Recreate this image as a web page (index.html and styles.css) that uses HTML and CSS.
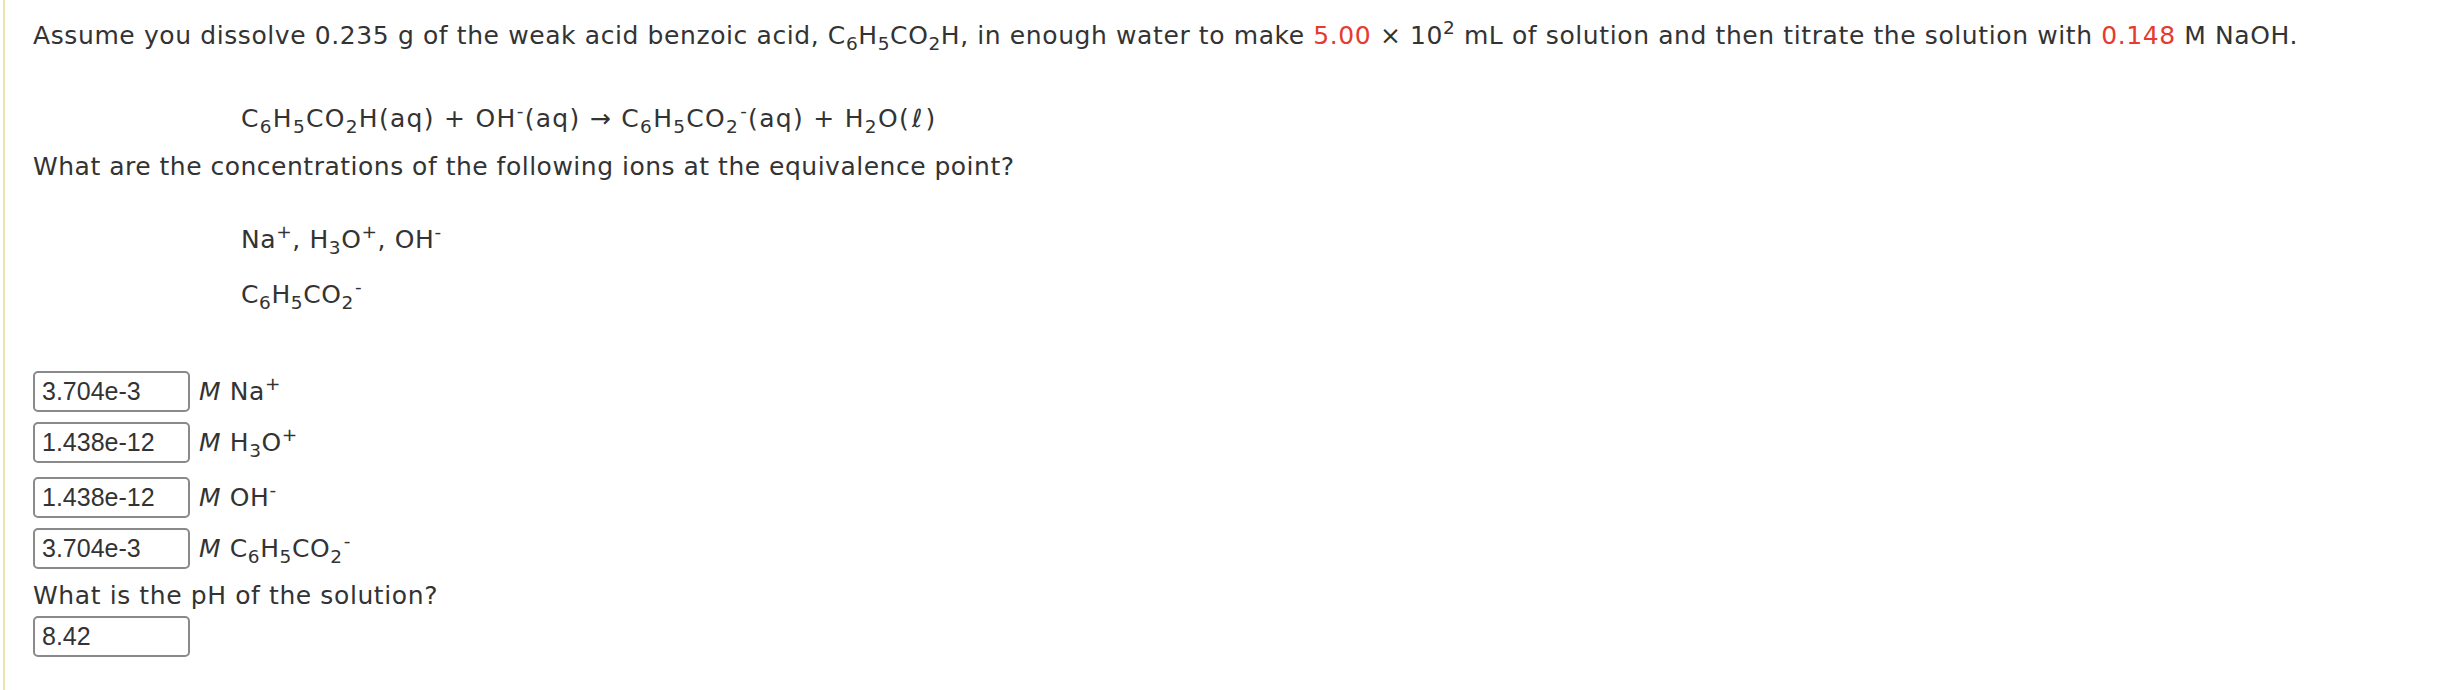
FILE: index.html
```html
<!DOCTYPE html>
<html>
<head>
<meta charset="utf-8">
<link rel="stylesheet" href="styles.css">
</head>
<body>
<div class="page">
  <div class="line l1">Assume you dissolve 0.235 g of the weak acid benzoic acid, C<sub>6</sub>H<sub>5</sub>CO<sub>2</sub>H, in enough water to make <span class="red">5.00</span> × 10<sup>2</sup> mL of solution and then titrate the solution with <span class="red">0.148</span> M NaOH.</div>
  <div class="line indent eq">C<sub>6</sub>H<sub>5</sub>CO<sub>2</sub>H(aq) + OH<sup>-</sup>(aq) → C<sub>6</sub>H<sub>5</sub>CO<sub>2</sub><sup class="tight">-</sup>(aq) + H<sub>2</sub>O(<span class="ell">ℓ</span>)</div>
  <div class="line q1">What are the concentrations of the following ions at the equivalence point?</div>
  <div class="line indent ions1">Na<sup>+</sup>, H<sub>3</sub>O<sup>+</sup>, OH<sup>-</sup></div>
  <div class="line indent ions2">C<sub>6</sub>H<sub>5</sub>CO<sub>2</sub><sup class="tight">-</sup></div>

  <div class="answers">
    <div class="row r1"><span class="box">3.704e-3</span><span class="label"><i>M</i> Na<sup>+</sup></span></div>
    <div class="row r2"><span class="box">1.438e-12</span><span class="label"><i>M</i> H<sub>3</sub>O<sup>+</sup></span></div>
    <div class="row r3"><span class="box">1.438e-12</span><span class="label"><i>M</i> OH<sup>-</sup></span></div>
    <div class="row r4"><span class="box">3.704e-3</span><span class="label"><i>M</i> C<sub>6</sub>H<sub>5</sub>CO<sub>2</sub><sup class="tight">-</sup></span></div>
  </div>
  <div class="line q2">What is the pH of the solution?</div>
  <div class="row r5"><span class="box">8.42</span></div>
</div>
</body>
</html>
```
FILE: styles.css
```css
html, body {
  margin: 0;
  padding: 0;
  background: #ffffff;
}
body {
  width: 2446px;
  height: 690px;
  overflow: hidden;
}
.page {
  margin-left: 3px;
  border-left: 2px solid #e9e6b2;
  height: 690px;
  padding-left: 28px;
  padding-top: 17px;
  box-sizing: border-box;
  font-family: "DejaVu Sans", Verdana, sans-serif;
  font-size: 25px;
  letter-spacing: 0.6px;
  color: #333333;
}
.line {
  line-height: 38px;
  height: 38px;
  white-space: nowrap;
}
.indent {
  padding-left: 208px;
}
.eq {
  margin-top: 45px;
  letter-spacing: 1.3px;
}
.ell {
  padding: 0 2px;
}
.q1 {
  margin-top: 10px;
  letter-spacing: 0.5px;
}
.ions1 { margin-top: 35px; }
.ions2 { margin-top: 17px; }
sub, sup {
  font-size: 74%;
  line-height: 0;
  position: relative;
  vertical-align: baseline;
}
sub { top: 0.32em; }
sup { top: -0.55em; }
sup.tight { margin-left: 1px; }
.red { color: #e63b2e; }
.answers {
  margin-top: 57px;
  display: flex;
  flex-direction: column;
}
.row {
  display: flex;
  align-items: center;
  height: 41px;
}
.r2 { margin-top: 10px; }
.r3 { margin-top: 14px; }
.r4 { margin-top: 10px; }
.r5 { margin-top: 1px; }
.q2 { margin-top: 8px; }
.box {
  box-sizing: border-box;
  width: 157px;
  height: 41px;
  border: 2px solid #8a8a8a;
  border-radius: 5px;
  padding-left: 7px;
  font-family: "Liberation Sans", Arial, sans-serif;
  font-size: 25px;
  letter-spacing: 0;
  line-height: 37px;
  color: #333333;
  white-space: nowrap;
}
.label {
  margin-left: 9px;
  line-height: 41px;
  white-space: nowrap;
}
.label i {
  font-style: italic;
}
```
